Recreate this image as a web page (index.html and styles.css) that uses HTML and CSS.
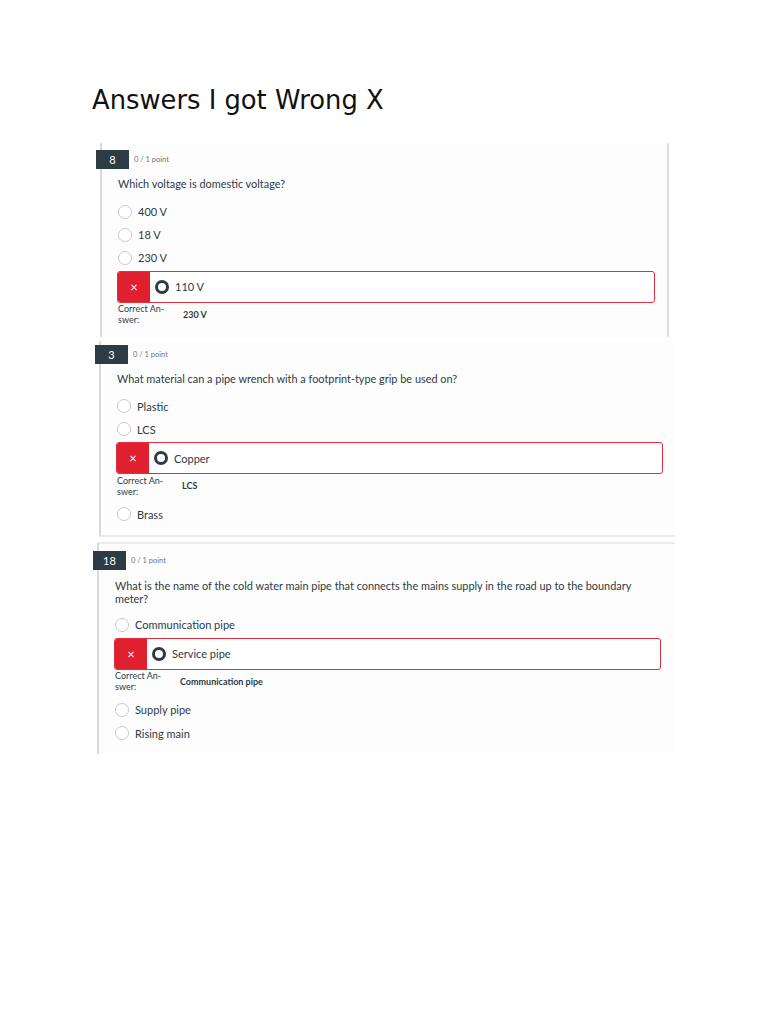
FILE: index.html
```html
<!DOCTYPE html>
<html lang="en">
<head>
<meta charset="utf-8">
<title>Answers I got Wrong X</title>
<link rel="stylesheet" href="styles.css">
</head>
<body>
<main class="page">
  <h1 class="title">Answers I got Wrong X</h1>

  <section class="card card-1">
    <div class="card-head">
      <span class="badge">8</span>
      <span class="points">0 / 1 point</span>
    </div>
    <p class="question">Which voltage is domestic voltage?</p>
    <div class="option first"><span class="radio"></span><span>400 V</span></div>
    <div class="option"><span class="radio"></span><span>18 V</span></div>
    <div class="option"><span class="radio"></span><span>230 V</span></div>
    <div class="wrong">
      <span class="wrong-mark">×</span>
      <span class="radio selected"></span>
      <span>110 V</span>
    </div>
    <div class="correct">
      <span class="correct-label">Correct An-<br>swer:</span>
      <span class="correct-value">230 V</span>
    </div>
  </section>

  <section class="card card-2">
    <div class="card-head">
      <span class="badge">3</span>
      <span class="points">0 / 1 point</span>
    </div>
    <p class="question">What material can a pipe wrench with a footprint-type grip be used on?</p>
    <div class="option first"><span class="radio"></span><span>Plastic</span></div>
    <div class="option"><span class="radio"></span><span>LCS</span></div>
    <div class="wrong">
      <span class="wrong-mark">×</span>
      <span class="radio selected"></span>
      <span>Copper</span>
    </div>
    <div class="correct">
      <span class="correct-label">Correct An-<br>swer:</span>
      <span class="correct-value">LCS</span>
    </div>
    <div class="option after"><span class="radio"></span><span>Brass</span></div>
  </section>

  <section class="card card-3">
    <div class="card-head">
      <span class="badge">18</span>
      <span class="points">0 / 1 point</span>
    </div>
    <p class="question two-line">What is the name of the cold water main pipe that connects the mains supply in the road up to the boundary<br>meter?</p>
    <div class="option first"><span class="radio"></span><span>Communication pipe</span></div>
    <div class="wrong">
      <span class="wrong-mark">×</span>
      <span class="radio selected"></span>
      <span>Service pipe</span>
    </div>
    <div class="correct">
      <span class="correct-label">Correct An-<br>swer:</span>
      <span class="correct-value">Communication pipe</span>
    </div>
    <div class="option after"><span class="radio"></span><span>Supply pipe</span></div>
    <div class="option"><span class="radio"></span><span>Rising main</span></div>
  </section>
</main>
</body>
</html>
```

FILE: styles.css
```css
* { box-sizing: border-box; }

html, body {
  margin: 0;
  padding: 0;
  background: #ffffff;
}

.page {
  padding: 84px 0 0 92px;
  font-family: Lato, "Open Sans", sans-serif;
  color: #2d3b45;
}

.title {
  margin: 0 0 27px 0;
  font-family: "DejaVu Sans", sans-serif;
  font-weight: normal;
  font-size: 25.8px;
  line-height: 32px;
  color: #111111;
}

.card {
  background: #fdfdfd;
  border-left: 2px solid #d9d9d9;
}

.card-1 {
  margin-left: 8px;
  width: 569px;
  padding: 7px 0 12px 16px;
  border-right: 2px solid #dcdcdc;
}

.card-2 {
  margin-left: 7px;
  margin-top: 3.5px;
  width: 576px;
  padding: 4px 0 9px 16px;
  border-bottom: 2px solid #ececec;
}

.card-3 {
  margin-left: 5px;
  margin-top: 5px;
  width: 578px;
  padding: 7px 0 9px 16px;
  border-top: 2px solid #ececec;
}

.card-head {
  display: flex;
  align-items: center;
  height: 19px;
  margin-left: -22px;
}

.badge {
  width: 33px;
  height: 19px;
  background: #2d3b45;
  color: #ffffff;
  font-size: 11px;
  line-height: 19px;
  text-align: center;
}

.points {
  margin-left: 5px;
  font-size: 7.5px;
  color: #6b7780;
}

.question {
  margin: 7px 0 0 0;
  font-size: 10.9px;
  line-height: 15px;
}

.question.two-line {
  margin-top: 9px;
  line-height: 13px;
}

.card-3 .question + .option.first { margin-top: 8.5px; }

.option {
  display: flex;
  align-items: center;
  gap: 6px;
  height: 23px;
  font-size: 11px;
}

.option.first { margin-top: 9px; }
.option.after { margin-top: 6px; }
.card-3 .option.after { margin-top: 6px; }
.card-3 .option.after + .option { height: 24px; }

.radio {
  width: 14px;
  height: 14px;
  border-radius: 50%;
  border: 1px solid #c5cbcf;
  background: #ffffff;
  flex: none;
}

.radio.selected {
  border: 3.5px solid #2d3b45;
}

.wrong {
  display: flex;
  align-items: center;
  height: 32px;
  margin-top: 1.5px;
  margin-left: -1px;
  width: 538px;
  border: 1.5px solid #e0303f;
  border-radius: 3px;
  background: #ffffff;
  font-size: 11px;
  overflow: hidden;
}

.card-2 .wrong, .card-3 .wrong { width: 547px; }

.wrong-mark {
  width: 32px;
  height: 100%;
  background: #e01f2f;
  color: #ffffff;
  font-size: 13px;
  display: flex;
  align-items: center;
  justify-content: center;
  margin-right: 5px;
}

.wrong .radio.selected { margin-right: 6px; }

.correct {
  display: flex;
  align-items: center;
  height: 22px;
  margin-top: 0.5px;
}

.correct-label {
  width: 65px;
  font-size: 9px;
  line-height: 11px;
}

.correct-value {
  font-size: 9px;
  font-weight: 700;
}
```
